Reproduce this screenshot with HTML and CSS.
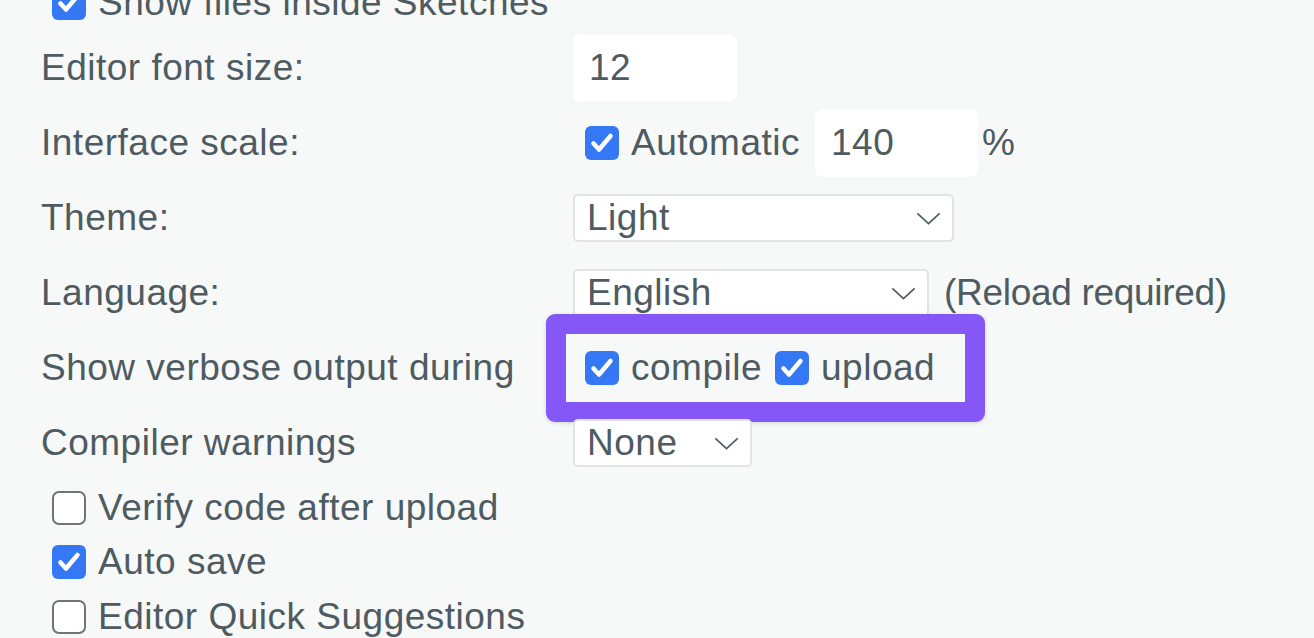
FILE: index.html
```html
<!DOCTYPE html>
<html>
<head>
<meta charset="utf-8">
<link rel="stylesheet" href="styles.css">
</head>
<body>
<div class="prefs">
  <div class="check-row">
    <span class="cb on"><svg viewBox="0 0 34 34"><path d="M8.5 17.5 L14 23.5 L25.5 10"/></svg></span>
    <span class="cb-label">Show files inside Sketches</span>
  </div>

  <div class="row">
    <div class="label">Editor font size:</div>
    <div class="field"><div class="input w164">12</div></div>
  </div>

  <div class="row">
    <div class="label">Interface scale:</div>
    <div class="field">
      <span class="cb on indent"><svg viewBox="0 0 34 34"><path d="M8.5 17.5 L14 23.5 L25.5 10"/></svg></span>
      <span class="cb-label">Automatic</span>
      <div class="input w163 scale">140</div>
      <span class="pct">%</span>
    </div>
  </div>

  <div class="row">
    <div class="label">Theme:</div>
    <div class="field">
      <div class="select w381">Light<svg class="chev" viewBox="0 0 26 14"><path d="M1 1.5 L13 12.5 L25 1.5"/></svg></div>
    </div>
  </div>

  <div class="row">
    <div class="label">Language:</div>
    <div class="field">
      <div class="select w356">English<svg class="chev" viewBox="0 0 26 14"><path d="M1 1.5 L13 12.5 L25 1.5"/></svg></div>
      <span class="note">(Reload required)</span>
    </div>
  </div>

  <div class="row">
    <div class="label">Show verbose output during</div>
    <div class="field verbose">
      <div class="highlight"></div>
      <span class="cb on indent"><svg viewBox="0 0 34 34"><path d="M8.5 17.5 L14 23.5 L25.5 10"/></svg></span>
      <span class="cb-label">compile</span>
      <span class="cb on gap13"><svg viewBox="0 0 34 34"><path d="M8.5 17.5 L14 23.5 L25.5 10"/></svg></span>
      <span class="cb-label">upload</span>
    </div>
  </div>

  <div class="row">
    <div class="label">Compiler warnings</div>
    <div class="field">
      <div class="select w179">None<svg class="chev" viewBox="0 0 26 14"><path d="M1 1.5 L13 12.5 L25 1.5"/></svg></div>
    </div>
  </div>

  <div class="check-row">
    <span class="cb off"></span>
    <span class="cb-label">Verify code after upload</span>
  </div>
  <div class="check-row">
    <span class="cb on"><svg viewBox="0 0 34 34"><path d="M8.5 17.5 L14 23.5 L25.5 10"/></svg></span>
    <span class="cb-label">Auto save</span>
  </div>
  <div class="check-row">
    <span class="cb off"></span>
    <span class="cb-label">Editor Quick Suggestions</span>
  </div>
</div>
</body>
</html>
```

FILE: styles.css
```css
html, body {
  margin: 0;
  padding: 0;
  background: #f7f8f8;
  overflow: hidden;
}
body {
  font-family: "Liberation Sans", Arial, Helvetica, sans-serif;
  font-size: 37px;
  letter-spacing: 0.5px;
  color: #4e5b61;
}
.prefs {
  margin-top: -24.25px;
  padding-left: 41px;
}
.row {
  display: flex;
  align-items: center;
  height: 75px;
}
.label {
  width: 532px;
  flex: none;
  white-space: nowrap;
}
.field {
  display: flex;
  align-items: center;
  position: relative;
  height: 100%;
}
.check-row {
  display: flex;
  align-items: center;
  height: 54.5px;
  padding-left: 11px;
}
.cb {
  width: 34px;
  height: 34px;
  box-sizing: border-box;
  border-radius: 6px;
  flex: none;
  display: inline-block;
  margin-right: 12px;
  position: relative;
  z-index: 1;
}
.cb.on {
  background: #3478f6;
}
.cb.off {
  background: #ffffff;
  border: 2px solid #737373;
  border-radius: 7px;
}
.cb svg {
  width: 34px;
  height: 34px;
  display: block;
}
.cb svg path {
  fill: none;
  stroke: #ffffff;
  stroke-width: 4.5;
  stroke-linecap: round;
  stroke-linejoin: round;
}
.cb.indent { margin-left: 12px; }
.cb.gap13 { margin-left: 13px; }
.cb-label {
  white-space: nowrap;
  position: relative;
  z-index: 1;
}
.input {
  background: #ffffff;
  border-radius: 8px;
  height: 68px;
  box-sizing: border-box;
  padding-left: 16px;
  display: flex;
  align-items: center;
}
.w164 { width: 164px; }
.w163 { width: 163px; }
.scale { margin-left: 15px; }
.pct { margin-left: 4px; }
.select {
  height: 48px;
  box-sizing: border-box;
  background: #ffffff;
  border: 2px solid #dfe4e4;
  border-radius: 5px;
  padding-left: 12px;
  display: flex;
  align-items: center;
  position: relative;
}
.w381 { width: 381px; }
.w356 { width: 356px; }
.w179 { width: 179px; }
.chev {
  position: absolute;
  right: 11px;
  top: 16px;
  width: 25px;
  height: 13px;
}
.chev path {
  fill: none;
  stroke: #4e5b61;
  stroke-width: 1.8;
}
.note {
  margin-left: 15px;
  white-space: nowrap;
  letter-spacing: -0.3px;
}
.highlight {
  position: absolute;
  left: -27px;
  top: -16px;
  width: 439px;
  height: 108px;
  box-sizing: border-box;
  border: 20px solid #8557f6;
  border-radius: 9px;
  background: #f7f8f8;
  box-shadow: 0 1px 4px rgba(0,0,0,0.15);
}
```
